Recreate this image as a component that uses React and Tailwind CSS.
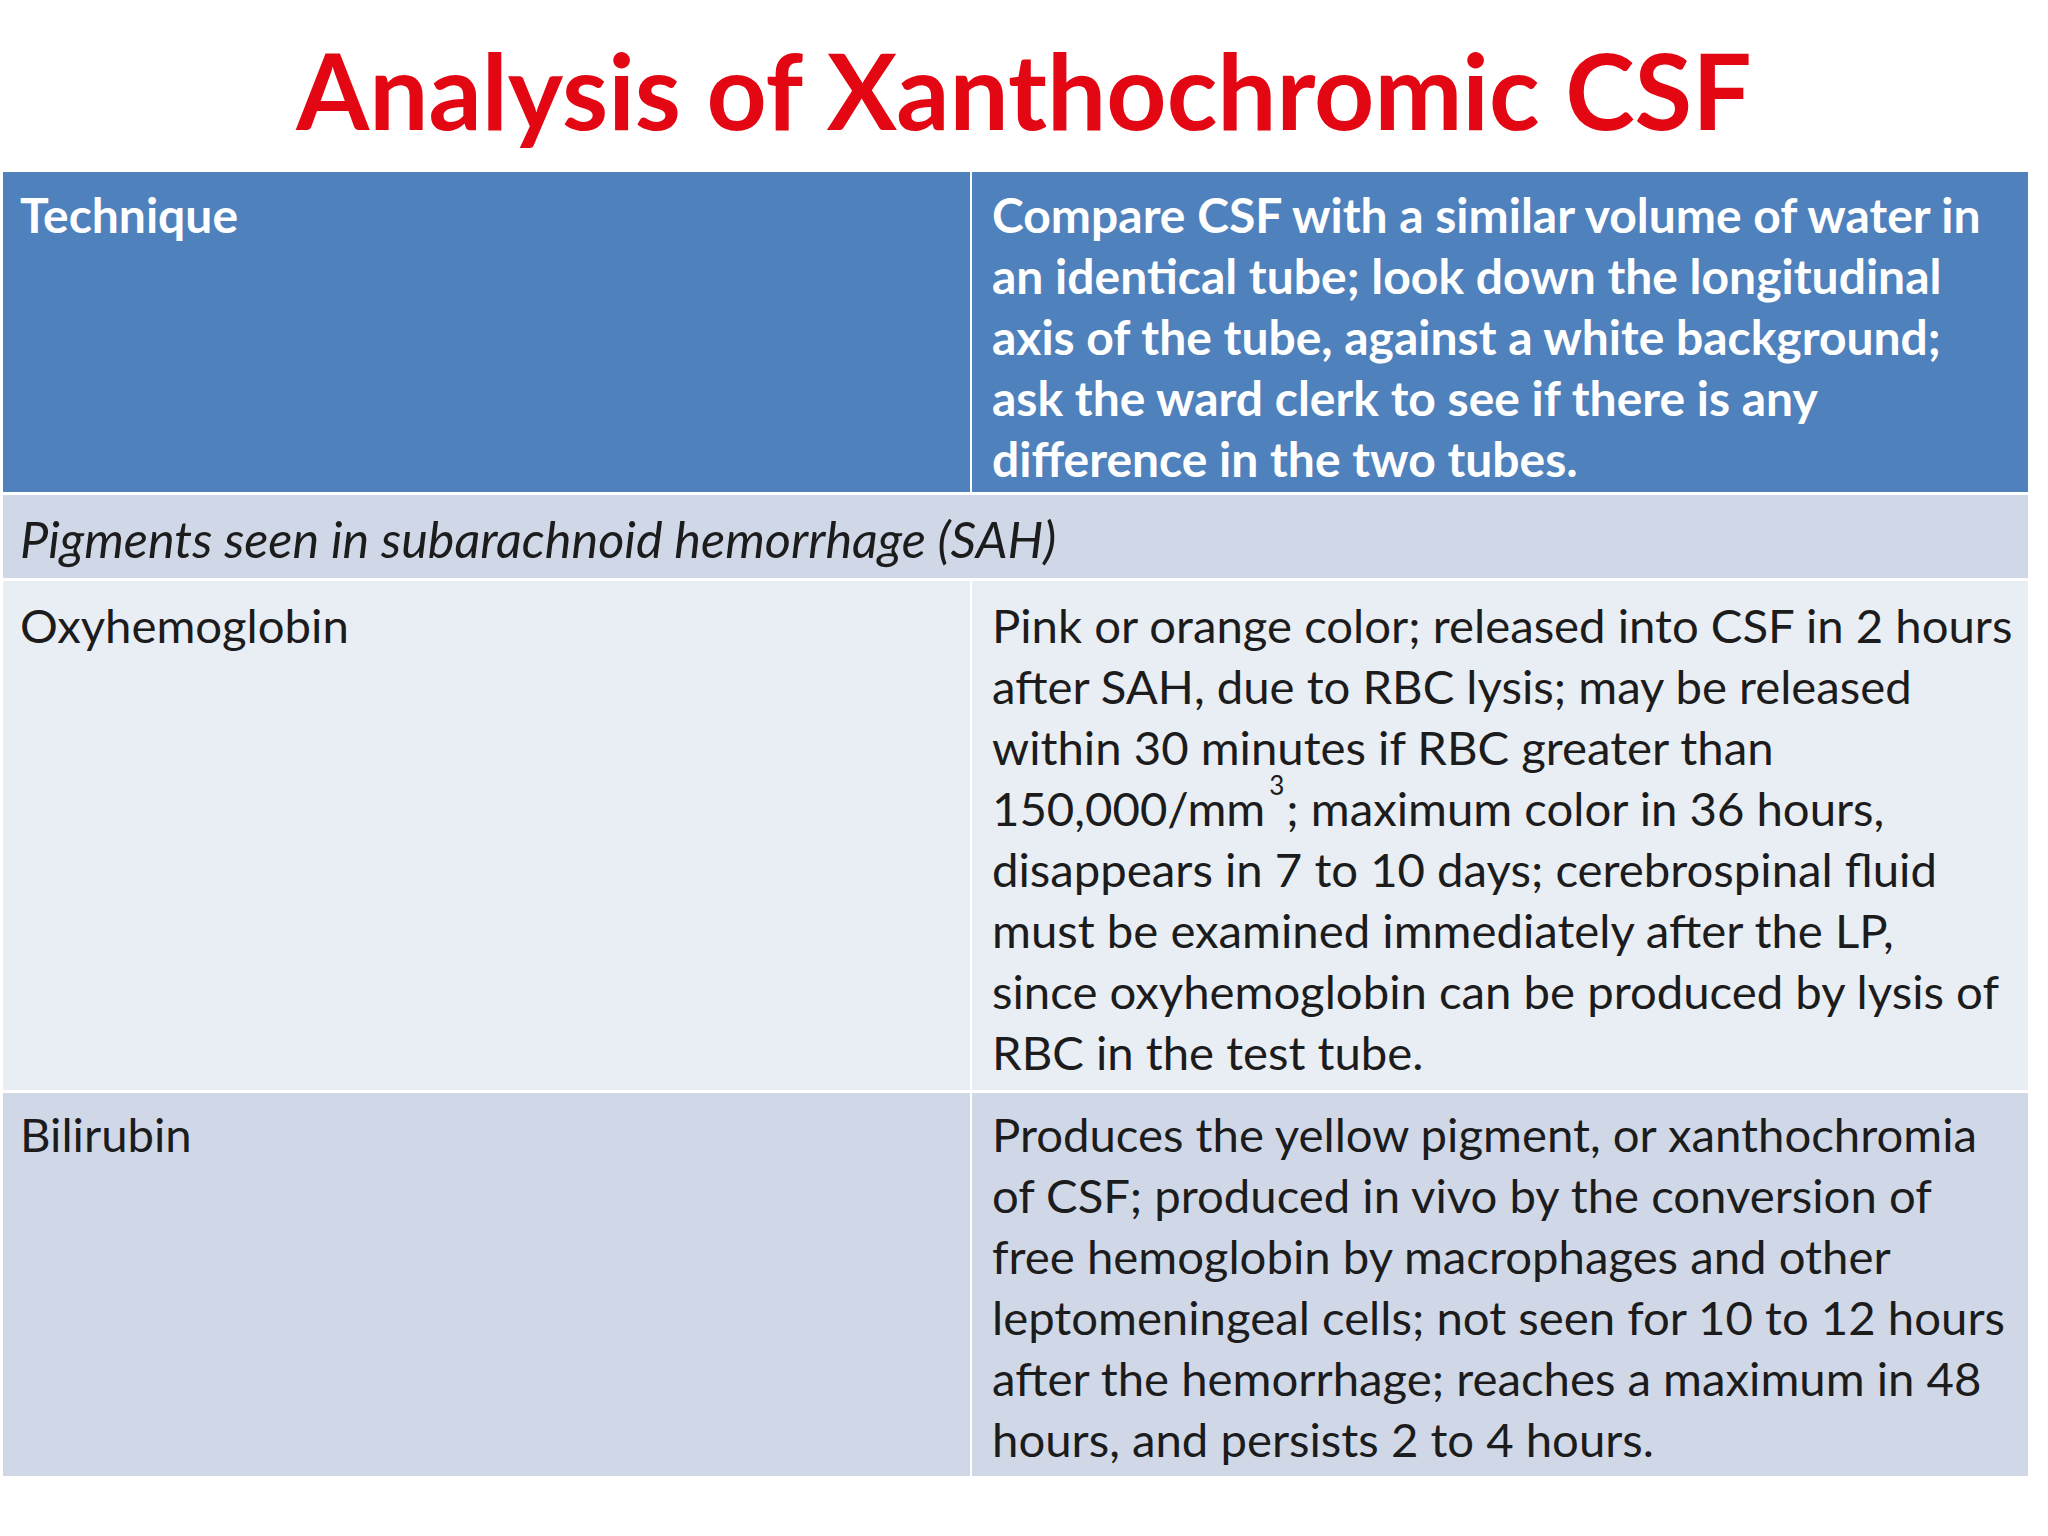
import React from 'react';

const oxyLines = [
  'Pink or orange color; released into CSF in 2 hours',
  'after SAH, due to RBC lysis; may be released',
  'within 30 minutes if RBC greater than',
  'SUP',
  'disappears in 7 to 10 days; cerebrospinal fluid',
  'must be examined immediately after the LP,',
  'since oxyhemoglobin can be produced by lysis of',
  'RBC in the test tube.',
];

const biliLines = [
  'Produces the yellow pigment, or xanthochromia',
  'of CSF; produced in vivo by the conversion of',
  'free hemoglobin by macrophages and other',
  'leptomeningeal cells; not seen for 10 to 12 hours',
  'after the hemorrhage; reaches a maximum in 48',
  'hours, and persists 2 to 4 hours.',
];

const techLines = [
  'Compare CSF with a similar volume of water in',
  'an identical tube; look down the longitudinal',
  'axis of the tube, against a white background;',
  'ask the ward clerk to see if there is any',
  'difference in the two tubes.',
];

// one text line per row of the slide, so the breaks stay where they are
const Lines = ({ lines }) => (
  <div>
    {lines.map((line, i) =>
      line === 'SUP' ? (
        <div key={i} className="whitespace-nowrap">
          150,000/mm
          <span className="relative -top-[31px] ml-[4px] mr-[2px] text-[26px] leading-none">3</span>
          ; maximum color in 36 hours,
        </div>
      ) : (
        <div key={i} className="whitespace-nowrap">{line}</div>
      )
    )}
  </div>
);

export default function App() {
  return (
    <div className="w-[2048px] h-[1536px] bg-white overflow-hidden font-['Lato','Open_Sans',sans-serif]">
      {/* Title */}
      <h1 className="h-[172px] pt-[37px] text-center text-[105px] leading-none font-bold text-[#e30613]">
        Analysis of Xanthochromic CSF
      </h1>

      {/* Table */}
      <div className="ml-[3px] grid w-[2025px] grid-cols-[967px_1056px] gap-x-[2px] gap-y-[3px] text-[47.3px] leading-[61px] text-[#1c1c1c]">
        <div className="h-[320px] bg-[#4f81bd] pl-[17px] pt-[12px] text-[48px] font-bold text-white">Technique</div>
        <div className="h-[320px] bg-[#4f81bd] pl-[20px] pt-[12px] text-[48px] font-bold text-white">
          <Lines lines={techLines} />
        </div>

        <div className="col-span-2 h-[83px] bg-[#d0d8e8] pl-[17px] pt-[13px] text-[50.4px] italic whitespace-nowrap">
          Pigments seen in subarachnoid hemorrhage (SAH)
        </div>

        <div className="h-[509px] bg-[#e9edf4] pl-[17px] pt-[13px]">Oxyhemoglobin</div>
        <div className="h-[509px] bg-[#e9edf4] pl-[20px] pt-[13px]">
          <Lines lines={oxyLines} />
        </div>

        <div className="h-[383px] bg-[#d0d8e8] pl-[17px] pt-[10px]">Bilirubin</div>
        <div className="h-[383px] bg-[#d0d8e8] pl-[20px] pt-[10px]">
          <Lines lines={biliLines} />
        </div>
      </div>
    </div>
  );
}
